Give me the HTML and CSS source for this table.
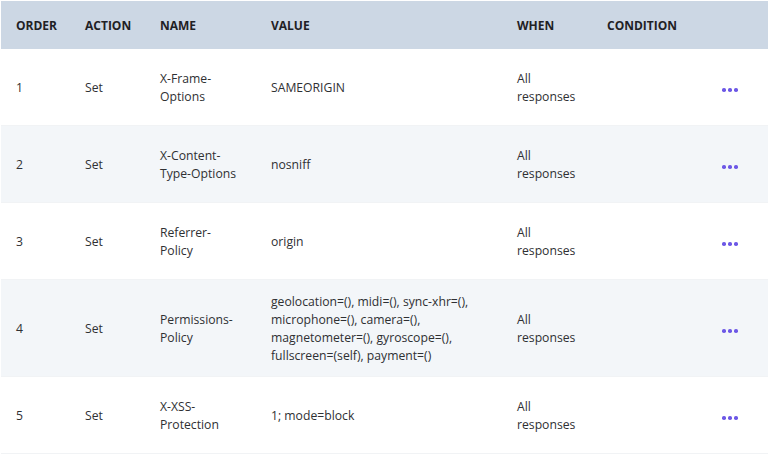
FILE: index.html
```html
<!DOCTYPE html>
<html>
<head>
<meta charset="utf-8">
<link rel="stylesheet" href="styles.css">
</head>
<body>
<table class="rules">
  <colgroup>
    <col class="c-order"><col class="c-action"><col class="c-name"><col class="c-value"><col class="c-when"><col class="c-cond"><col class="c-menu">
  </colgroup>
  <thead>
    <tr><th>Order</th><th>Action</th><th>Name</th><th>Value</th><th>When</th><th>Condition</th><th></th></tr>
  </thead>
  <tbody>
    <tr><td>1</td><td>Set</td><td>X-Frame-Options</td><td>SAMEORIGIN</td><td>All responses</td><td></td><td class="menu"><span class="dots"><i></i><i></i><i></i></span></td></tr>
    <tr class="alt"><td>2</td><td>Set</td><td>X-Content-Type-Options</td><td>nosniff</td><td>All responses</td><td></td><td class="menu"><span class="dots"><i></i><i></i><i></i></span></td></tr>
    <tr><td>3</td><td>Set</td><td>Referrer-Policy</td><td>origin</td><td>All responses</td><td></td><td class="menu"><span class="dots"><i></i><i></i><i></i></span></td></tr>
    <tr class="alt"><td>4</td><td>Set</td><td>Permissions-Policy</td><td>geolocation=(), midi=(), sync-xhr=(), microphone=(), camera=(), magnetometer=(), gyroscope=(), fullscreen=(self), payment=()</td><td>All responses</td><td></td><td class="menu"><span class="dots"><i></i><i></i><i></i></span></td></tr>
    <tr><td>5</td><td>Set</td><td>X-XSS-Protection</td><td>1; mode=block</td><td>All responses</td><td></td><td class="menu"><span class="dots"><i></i><i></i><i></i></span></td></tr>
  </tbody>
</table>
</body>
</html>
```
FILE: styles.css
```css
html, body { margin: 0; padding: 0; background: #fff; }
body { font-family: "Open Sans", sans-serif; font-size: 12.2px; color: #2f3033; }
.rules {
  margin: 1px;
  width: 767px;
  border-collapse: collapse;
  table-layout: fixed;
}
.c-order { width: 69px; }
.c-action { width: 75px; }
.c-name { width: 111px; }
.c-value { width: 246px; }
.c-when { width: 90px; }
.c-cond { width: 108px; }
.c-menu { width: 68px; }
.rules th {
  background: #ccd7e4;
  height: 48px;
  padding: 1px 15px 0;
  text-align: left;
  text-transform: uppercase;
  font-weight: 700;
  font-size: 12px;
  color: #1f2125;
  vertical-align: middle;
  box-sizing: border-box;
}
.rules td {
  padding: 13px 15px 11px;
  line-height: 18px;
  height: 52px;
  vertical-align: middle;
  border-bottom: 1px solid #f1f3f5;
}
.rules tr.alt td { background: #f3f6f9; }
.rules td.menu { padding: 1px 0 0 22px; }
.dots { display: inline-flex; gap: 2.5px; align-items: center; }
.dots i { width: 3.5px; height: 3.5px; border-radius: 50%; background: #6d58e6; display: block; }
```
